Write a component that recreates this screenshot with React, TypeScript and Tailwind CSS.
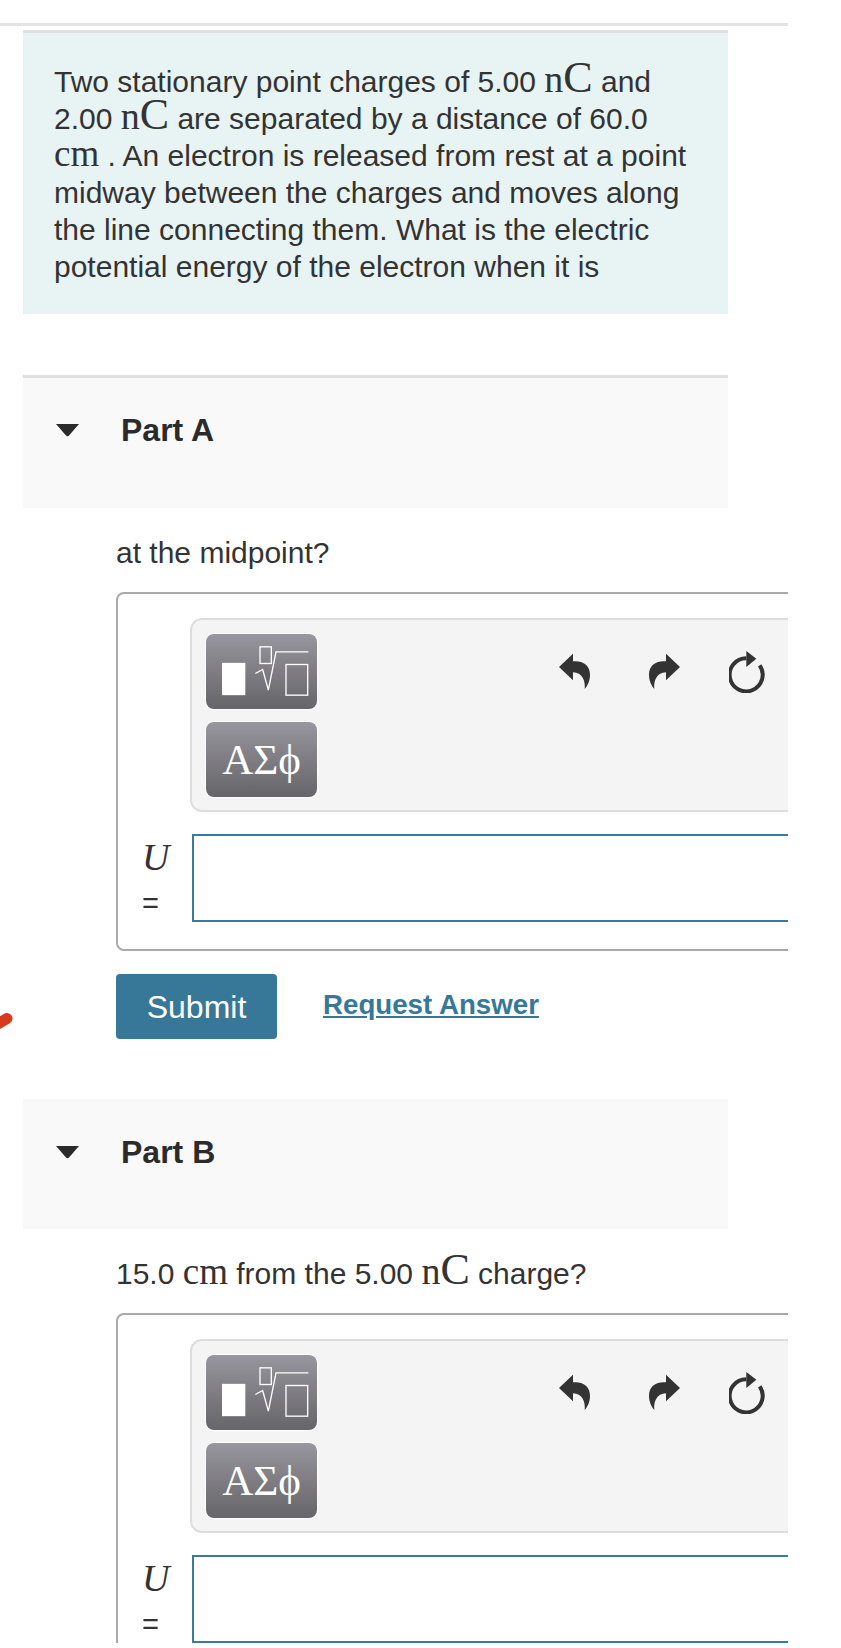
import React from 'react';

const sans = "font-['Liberation_Sans',Arial,sans-serif]";
const serif = "font-['Liberation_Serif','Times_New_Roman',serif]";

function Unit({ children }: { children: React.ReactNode }) {
  return <span className={`${serif} text-[37px] leading-[0]`}>{children}</span>;
}

function NanoCoulomb() {
  return (
    <span className={`${serif} leading-[0]`}>
      <span className="text-[38px] leading-[0]">n</span>
      <span className="text-[44px] leading-[0]">C</span>
    </span>
  );
}

function UndoArrow({ flip }: { flip?: boolean }) {
  return (
    <svg width="31" height="36" viewBox="0 0 93 108" className={flip ? '-scale-x-100' : ''}>
      <path
        d="M0 42 L42 2 L42 25 C75 22 93 40 93 65 C93 85 85 98 77 108 C80 85 70 58 42 58 L42 82 Z"
        fill="#333"
      />
    </svg>
  );
}

function ResetArrow() {
  return (
    <svg width="37" height="42" viewBox="0 0 111 126">
      <path d="M92 43 A49.5 49.5 0 1 1 52 22" fill="none" stroke="#333" strokeWidth="12" />
      <path d="M52 0 L82 23 L52 48 Z" fill="#333" />
    </svg>
  );
}

function ToolButton({ children }: { children: React.ReactNode }) {
  return (
    <div className="w-[111px] h-[75px] rounded-[8px] ring-1 ring-white bg-linear-to-b from-[#98969e] to-[#666569] flex items-center justify-center">
      {children}
    </div>
  );
}

function AnswerBox() {
  return (
    <div className="ml-[116px] w-[760px] h-[359px] border-2 border-[#aaaaaa] rounded-[8px] pt-[24px]">
      <div className="ml-[72px] h-[194px] border-2 border-[#dddddd] bg-[#f4f4f4] rounded-[12px] pl-[14px] pt-[14px] flex items-start">
        <div className="flex flex-col gap-[13px]">
          <ToolButton>
            <svg width="111" height="75" viewBox="0 0 333 222">
              <rect x="48" y="85" width="70" height="97" fill="#fff" />
              <rect x="162" y="37" width="34" height="50" fill="none" stroke="#fff" strokeWidth="4" />
              <path d="M148 117 L170 105 L187 167 L210 52 L307 52" fill="none" stroke="#fff" strokeWidth="4" />
              <rect x="240" y="90" width="65" height="92" fill="none" stroke="#fff" strokeWidth="4" />
            </svg>
          </ToolButton>
          <ToolButton>
            <span className={`${serif} text-[43px] text-white leading-none`}>ΑΣϕ</span>
          </ToolButton>
        </div>
        <div className="ml-[242px] mt-[19px] flex">
          <UndoArrow />
          <div className="ml-[59px]">
            <UndoArrow flip />
          </div>
          <div className="ml-[49px] -mt-[2px]">
            <ResetArrow />
          </div>
        </div>
      </div>
      <div className="mt-[22px] flex">
        <div className="w-[74px] pl-[24px] pt-[2px] text-[#333333]">
          <div className={`${serif} italic text-[38px] leading-[42px]`}>U</div>
          <div className={`${sans} mt-[7px] text-[29px] leading-[36px]`}>=</div>
        </div>
        <input readOnly className="h-[88px] flex-1 border-2 border-[#3a7b9b] bg-white" />
      </div>
    </div>
  );
}

function Part({
  label,
  first,
  question,
}: {
  label: string;
  first?: boolean;
  question: React.ReactNode;
}) {
  return (
    <section>
      <div
        className={`ml-[23px] w-[705px] bg-[#f9f9f9] pl-[32px] flex items-start ${
          first ? 'h-[133px] border-t-[3px] border-[#e0e0e0]' : 'h-[130px]'
        }`}
      >
        <svg width="25" height="14" viewBox="0 0 25 14" className={first ? 'mt-[45px]' : 'mt-[46px]'}>
          <path d="M1 1 L24 1 L14 12.5 Q12.5 14 11 12.5 Z" fill="#2b2b2b" />
        </svg>
        <div className={`ml-[41px] ${first ? 'mt-[34px]' : 'mt-[35px]'} text-[32px] leading-[37px] font-bold text-[#2b2b2b]`}>
          {label}
        </div>
      </div>
      <p className={`ml-[116px] mt-[26px] text-[30px] leading-[37px] text-[#333333] ${first ? '' : 'whitespace-nowrap'}`}>
        {question}
      </p>
      <div className="mt-[21px]">
        <AnswerBox />
      </div>
      {first && (
        <div className="ml-[116px] mt-[23px] flex items-center">
          <button className="w-[161px] h-[65px] rounded-[4px] bg-[#377899] text-white text-[32px]">Submit</button>
          <a className="ml-[46px] -mt-[4px] text-[27.7px] leading-[37px] font-bold text-[#377899] underline">
            Request Answer
          </a>
        </div>
      )}
    </section>
  );
}

export default function App() {
  return (
    <div className={`relative w-[841px] h-[1648px] bg-white ${sans}`}>
      <div className="w-[788px] h-[1643px] overflow-hidden pt-[23px]">
        <div className="h-[3px] bg-[#e3e3e3]" />
        <div className="ml-[23px] mt-[4px] w-[705px] h-[284px] border-t-[3px] border-[#e0e0e0] bg-[#e8f4f4] pl-[31px] pt-[30px] text-[30px] leading-[37px] text-[#333333] whitespace-nowrap">
          Two stationary point charges of 5.00 <NanoCoulomb /> and
          <br />
          2.00 <NanoCoulomb /> are separated by a distance of 60.0
          <br />
          <Unit>cm</Unit> . An electron is released from rest at a point
          <br />
          midway between the charges and moves along
          <br />
          the line connecting them. What is the electric
          <br />
          potential energy of the electron when it is
        </div>

        <div className="mt-[61px]">
          <Part label="Part A" first question="at the midpoint?" />
        </div>
        <div className="mt-[60px]">
          <Part
            label="Part B"
            question={
              <>
                15.0 <Unit>cm</Unit> from the 5.00 <NanoCoulomb /> charge?
              </>
            }
          />
        </div>
      </div>

      {/* red pen mark at the page edge */}
      <svg width="14" height="20" viewBox="0 0 14 20" className="absolute left-0 top-[1011px]">
        <path d="M-4 14 L7 7.5" stroke="#d93a1e" strokeWidth="11" strokeLinecap="round" />
      </svg>
    </div>
  );
}
